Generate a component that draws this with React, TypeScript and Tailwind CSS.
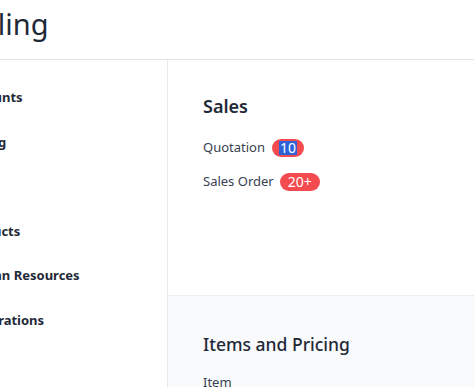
export default function App() {
  const nav = ['Accounts', 'Selling', 'Stock', 'Products', 'Human Resources', 'Integrations'];

  return (
    <div className="w-[474px] h-[387px] overflow-hidden bg-white text-[#1f2937]" style={{ fontFamily: '"Noto Sans", "Open Sans", sans-serif' }}>
      <div className="-ml-[44px] w-[560px]">
        {/* Header */}
        <header className="h-[60px] border-b border-[#e4e4e7] flex items-center pb-[12px]">
          <h1 className="pl-[8px] text-[29px] leading-none text-[#1f2937]">Billing</h1>
        </header>

        <div className="flex">
          {/* Sidebar */}
          <aside className="w-[212px] shrink-0 border-r border-[#e8e8ea] h-[400px] pt-[28px]">
            <ul className="flex flex-col">
              {nav.map((n) => (
                <li key={n} className="h-[44.5px] pl-[7px] text-[13px] font-bold text-[#1f2937]">
                  {n}
                </li>
              ))}
            </ul>
          </aside>

          {/* Main */}
          <main className="flex-1 flex flex-col">
            <section className="h-[236px] border-b border-[#ececee] pl-[35px] pt-[34px]">
              <h2 className="text-[18px] font-semibold leading-[24px] text-[#1f2937]">Sales</h2>
              <div className="mt-[18px] flex flex-col gap-[10px] text-[13px] text-[#374151]">
                <div className="flex items-center gap-[7px] h-[24px]">
                  <span>Quotation</span>
                  <span className="h-[18px] px-[7px] rounded-full bg-[#f34b4f] text-white flex items-center text-[14px] leading-none">
                    <span className="bg-[#2e63d8] px-[1px]">10</span>
                  </span>
                </div>
                <div className="flex items-center gap-[6px] h-[24px]">
                  <span>Sales Order</span>
                  <span className="h-[18px] px-[8px] rounded-full bg-[#f34b4f] text-white flex items-center text-[14px] leading-none">
                    20+
                  </span>
                </div>
              </div>
            </section>
            <section className="bg-[#f9fafb] pl-[35px] pt-[34px] h-[200px]">
              <h2 className="text-[17.5px] font-medium leading-[28px] text-[#1f2937]">Items and Pricing</h2>
              <div className="mt-[15px] text-[13px] text-[#374151]">Item</div>
            </section>
          </main>
        </div>
      </div>
    </div>
  );
}
